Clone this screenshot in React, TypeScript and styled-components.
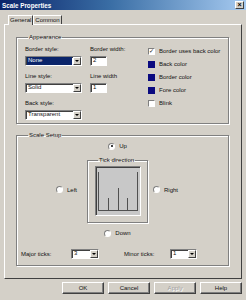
import * as React from 'react';
import styled, { createGlobalStyle } from 'styled-components';

const Global = createGlobalStyle`
  html, body { margin: 0; padding: 0; }
  body {
    background: #d4d0c8;
    font-family: "Liberation Sans", Arial, sans-serif;
    font-size: 6px;
    color: #111;
  }
`;

const Win = styled.div`
  width: 246px;
  height: 300px;
  display: flex;
  flex-direction: column;
  background: #d4d0c8;
  overflow: hidden;
`;

const TitleBar = styled.div`
  height: 10px;
  display: flex;
  align-items: center;
  justify-content: space-between;
  padding: 0 2px 0 2px;
  background: linear-gradient(to right, #0a246a 0%, #3a6ea5 45%, #a6caf0 100%);
  color: #fff;
  font-weight: bold;
  font-size: 6.3px;
`;

const CloseBtn = styled.div`
  width: 9px;
  height: 8px;
  box-sizing: border-box;
  background: #d4d0c8;
  border: 1px solid;
  border-color: #fff #404040 #404040 #fff;
  color: #000;
  font-size: 7px;
  line-height: 6px;
  text-align: center;
`;

const Body = styled.div`
  flex: 1;
  display: flex;
  flex-direction: column;
  padding: 5px 4px 0 4px;
`;

const Tabs = styled.div`
  display: flex;
  height: 9px;
  padding-left: 4px;
  align-items: flex-end;
`;

const Tab = styled.div<{ $active?: boolean }>`
  height: ${p => (p.$active ? 10 : 9)}px;
  box-sizing: border-box;
  padding: 0 1px;
  margin-bottom: ${p => (p.$active ? -1 : 0)}px;
  background: #d4d0c8;
  border: 1px solid;
  border-bottom: none;
  border-color: #fff #404040 #fff #fff;
  line-height: 8px;
  position: relative;
  z-index: ${p => (p.$active ? 1 : 0)};
`;

const Panel = styled.div`
  height: 255px;
  box-sizing: border-box;
  border: 1px solid;
  border-color: #fff #404040 #404040 #fff;
  padding: 8px 12px 11px 11px;
  display: flex;
  flex-direction: column;
  gap: 7px;
`;

const Group = styled.fieldset<{ $h: number }>`
  margin: 0;
  height: ${p => p.$h}px;
  box-sizing: border-box;
  border: 1px solid #808080;
  box-shadow: inset 1px 1px 0 #fff, 1px 1px 0 #fff;
  padding: 0 8px;
`;

const Legend = styled.legend`
  padding: 0 1px;
  margin-left: 3px;
  line-height: 8px;
`;

const AppearRow = styled.div`
  display: flex;
  padding-top: 4px;
`;

const FieldGrid = styled.div`
  display: grid;
  grid-template-columns: 57px 17px;
  column-gap: 8px;
  row-gap: 6px;
`;

const Field = styled.div`
  display: flex;
  flex-direction: column;
  gap: 3px;
`;

const Label = styled.span`
  line-height: 8px;
  white-space: nowrap;
`;

const Sunken = styled.div<{ $w: number }>`
  width: ${p => p.$w}px;
  height: 10px;
  box-sizing: border-box;
  background: #fff;
  border: 1px solid;
  border-color: #808080 #fff #fff #808080;
  box-shadow: inset 1px 1px 0 #404040;
  display: flex;
  align-items: center;
`;

const ComboText = styled.span<{ $sel?: boolean }>`
  flex: 1;
  height: 100%;
  margin: 1px;
  padding-left: 1px;
  line-height: 7px;
  background: ${p => (p.$sel ? '#0a246a' : 'transparent')};
  color: ${p => (p.$sel ? '#fff' : '#111')};
  box-sizing: border-box;
  white-space: nowrap;
  overflow: hidden;
`;

const Arrow = styled.span`
  width: 8px;
  height: 8px;
  box-sizing: border-box;
  background: #d4d0c8;
  border: 1px solid;
  border-color: #fff #404040 #404040 #fff;
  display: flex;
  align-items: center;
  justify-content: center;
  &::after {
    content: '';
    border-left: 2px solid transparent;
    border-right: 2px solid transparent;
    border-top: 2px solid #000;
  }
`;

const Checks = styled.div`
  margin-left: 41px;
  margin-top: 2px;
  display: flex;
  flex-direction: column;
  gap: 5px;
`;

const CheckRow = styled.div`
  display: flex;
  align-items: center;
  gap: 4px;
  height: 8px;
`;

const Box = styled.span<{ $fill?: string }>`
  width: 7px;
  height: 7px;
  box-sizing: border-box;
  background: ${p => p.$fill || '#fff'};
  border: 1px solid;
  border-color: ${p => (p.$fill ? p.$fill : '#808080 #fff #fff #808080')};
  font-size: 6px;
  line-height: 5px;
  text-align: center;
`;

const ScaleBody = styled.div`
  display: flex;
  flex-direction: column;
  padding-top: 3px;
`;

const DirGrid = styled.div`
  display: grid;
  grid-template-columns: 62px 61px 1fr;
  align-items: center;
`;

const Center = styled.div`
  display: flex;
  flex-direction: column;
  align-items: center;
  gap: 6px;
`;

const Radio = styled.label<{ $side?: 'left' | 'right' }>`
  display: flex;
  align-items: center;
  gap: 4px;
  line-height: 8px;
  justify-self: ${p => (p.$side === 'left' ? 'end' : 'start')};
  margin-right: ${p => (p.$side === 'left' ? 10 : 0)}px;
  margin-left: ${p => (p.$side === 'right' ? 5 : 0)}px;
`;

const Dot = styled.span<{ $on?: boolean }>`
  width: 7px;
  height: 7px;
  box-sizing: border-box;
  border-radius: 50%;
  background: #fff;
  border: 1px solid;
  border-color: #808080 #fff #fff #808080;
  display: flex;
  align-items: center;
  justify-content: center;
  &::after {
    content: '';
    width: 2px;
    height: 2px;
    border-radius: 50%;
    background: ${p => (p.$on ? '#000' : 'transparent')};
  }
`;

const TickGroup = styled.fieldset`
  margin: 0;
  width: 61px;
  height: 67px;
  box-sizing: border-box;
  border: 1px solid #808080;
  box-shadow: inset 1px 1px 0 #fff, 1px 1px 0 #fff;
  padding: 2px 6px 0 7px;
`;

const Preview = styled.div`
  width: 46px;
  height: 50px;
  box-sizing: border-box;
  background: #c8c8c8;
  border: 1px solid;
  border-color: #808080 #fff #fff #808080;
  box-shadow: inset 1px 1px 0 #404040;
`;

const TicksRow = styled.div`
  display: flex;
  align-items: center;
  margin-top: 12px;
  margin-left: -4px;
`;

const TickLabel = styled.span<{ $w: number }>`
  width: ${p => p.$w}px;
  line-height: 8px;
`;

const Buttons = styled.div`
  display: flex;
  justify-content: flex-end;
  gap: 4px;
  margin-top: 3px;
`;

const Button = styled.div<{ $disabled?: boolean }>`
  width: 42px;
  height: 12px;
  box-sizing: border-box;
  border: 1px solid;
  border-color: #fff #404040 #404040 #fff;
  box-shadow: inset -1px -1px 0 #808080;
  text-align: center;
  line-height: 10px;
  color: ${p => (p.$disabled ? '#a0a0a0' : '#111')};
  text-shadow: ${p => (p.$disabled ? '1px 1px 0 #fff' : 'none')};
`;

const Combo = ({ w, text, sel }: { w: number; text: string; sel?: boolean }) => (
  <Sunken $w={w}>
    <ComboText $sel={sel}>{text}</ComboText>
    <Arrow />
  </Sunken>
);

const TickPicture = () => (
  <svg width="44" height="48" viewBox="0 0 44 48">
    <g stroke="#505050" strokeWidth="1">
      <line x1="2.5" y1="5" x2="2.5" y2="43" />
      <line x1="41.5" y1="5" x2="41.5" y2="43" />
      <line x1="2" y1="43.5" x2="42" y2="43.5" />
      <line x1="22.5" y1="21" x2="22.5" y2="43" />
      <line x1="12.5" y1="31" x2="12.5" y2="43" />
      <line x1="31.5" y1="31" x2="31.5" y2="43" />
    </g>
  </svg>
);

export default function App() {
  return (
    <Win>
      <Global />
      <TitleBar>
        <span>Scale Properties</span>
        <CloseBtn>×</CloseBtn>
      </TitleBar>
      <Body>
        <Tabs>
          <Tab $active>General</Tab>
          <Tab>Common</Tab>
        </Tabs>
        <Panel>
          <Group $h={91}>
            <Legend>Appearance</Legend>
            <AppearRow>
              <FieldGrid>
                <Field>
                  <Label>Border style:</Label>
                  <Combo w={57} text="None" sel />
                </Field>
                <Field>
                  <Label>Border width:</Label>
                  <Sunken $w={17}><ComboText>2</ComboText></Sunken>
                </Field>
                <Field>
                  <Label>Line style:</Label>
                  <Combo w={57} text="Solid" />
                </Field>
                <Field>
                  <Label>Line width</Label>
                  <Sunken $w={17}><ComboText>1</ComboText></Sunken>
                </Field>
                <Field>
                  <Label>Back style:</Label>
                  <Combo w={57} text="Transparent" />
                </Field>
              </FieldGrid>
              <Checks>
                <CheckRow><Box>✓</Box><Label>Border uses back color</Label></CheckRow>
                <CheckRow><Box $fill="#0a0a80" /><Label>Back color</Label></CheckRow>
                <CheckRow><Box $fill="#0a0a80" /><Label>Border color</Label></CheckRow>
                <CheckRow><Box $fill="#0a0a80" /><Label>Fore color</Label></CheckRow>
                <CheckRow><Box /><Label>Blink</Label></CheckRow>
              </Checks>
            </AppearRow>
          </Group>
          <Group $h={135}>
            <Legend>Scale Setup</Legend>
            <ScaleBody>
              <DirGrid>
                <Radio $side="left"><Dot />Left</Radio>
                <Center>
                  <Radio><Dot $on />Up</Radio>
                  <TickGroup>
                    <Legend>Tick direction</Legend>
                    <Preview><TickPicture /></Preview>
                  </TickGroup>
                  <Radio><Dot />Down</Radio>
                </Center>
                <Radio $side="right"><Dot />Right</Radio>
              </DirGrid>
              <TicksRow>
                <TickLabel $w={50}>Major ticks:</TickLabel>
                <Combo w={28} text="3" />
                <TickLabel $w={25} />
                <TickLabel $w={46}>Minor ticks:</TickLabel>
                <Combo w={27} text="1" />
              </TicksRow>
            </ScaleBody>
          </Group>
        </Panel>
        <Buttons>
          <Button>OK</Button>
          <Button>Cancel</Button>
          <Button $disabled>Apply</Button>
          <Button>Help</Button>
        </Buttons>
      </Body>
    </Win>
  );
}
